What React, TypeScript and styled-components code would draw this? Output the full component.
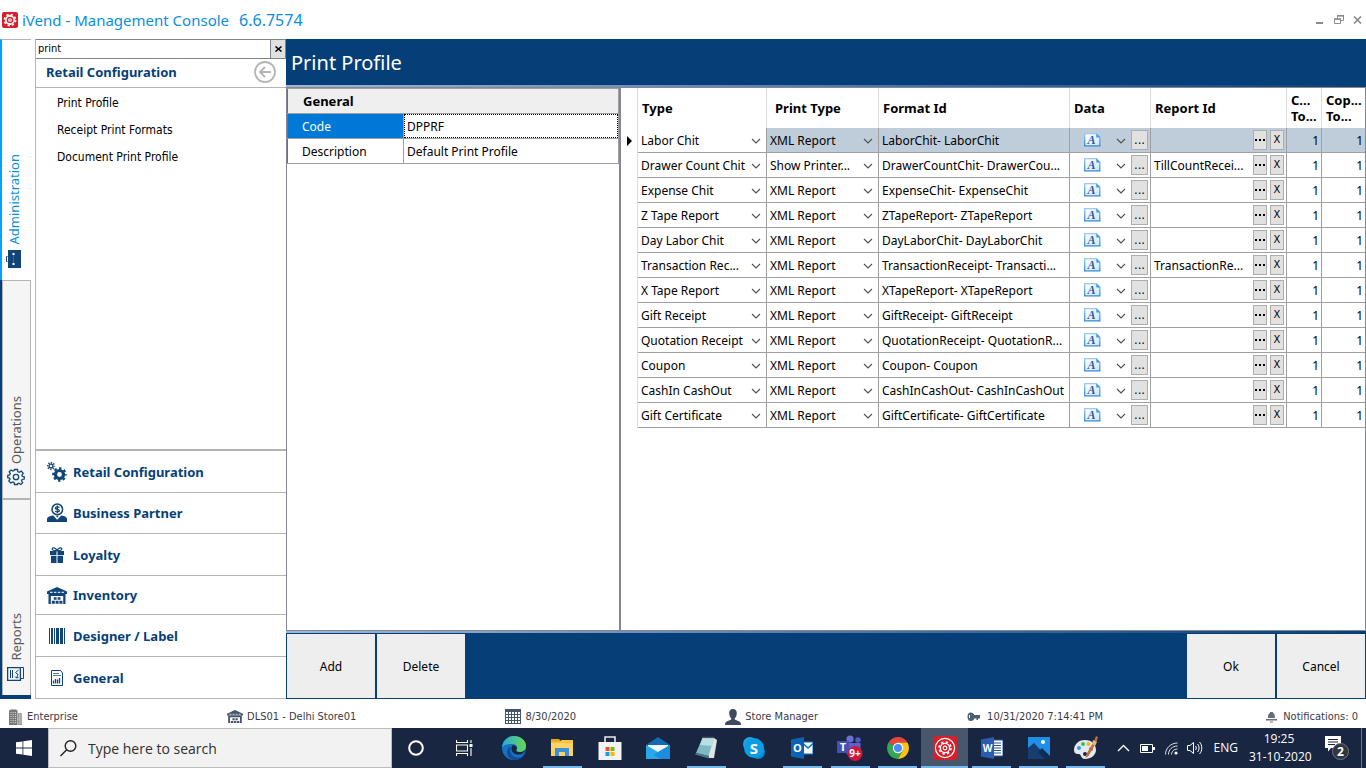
import React from "react";
import styled, { createGlobalStyle, css } from "styled-components";

const navy = "#063f78";
const ink = "#114577";
const line = "#b4b4b4";
const gridLine = "#a0a0a0";
const frame = "#828790";

const sans = `"Noto Sans", "Open Sans", sans-serif`;
const narrow = `"DejaVu Sans Condensed", "Noto Sans", sans-serif`;

const GlobalStyle = createGlobalStyle`
  *, *::before, *::after { box-sizing: border-box; }
  body { margin: 0; background: #fff; color: #000; font: 12px/16px ${sans}; }
  button, input, select { font: inherit; color: inherit; margin: 0; padding: 0; border: 0; border-radius: 0; background: none; outline: none; }
  svg { display: block; flex: none; }
  a { color: inherit; text-decoration: none; }
`;

/* ---------- window ---------- */

const Page = styled.div`
  min-height: 100vh;
  display: flex;
  flex-direction: column;
`;

const TitleBar = styled.header`
  height: 39px;
  display: flex;
  align-items: center;
  gap: 4px;
  padding-left: 2px;
  color: #0a8fdc;
  font-size: 15px;
  line-height: 20px;
`;

const Version = styled.span`
  margin-left: 6px;
  font-size: 16px;
`;

const WindowControls = styled.div`
  margin-left: auto;
  display: flex;
  gap: 2px;
`;

const WindowButton = styled.button`
  width: 17px;
  height: 16px;
  display: grid;
  place-items: center;
`;

const Workspace = styled.div`
  flex: 1;
  display: flex;
`;

/* ---------- module rail ---------- */

const Rail = styled.div`
  width: 31px;
  display: flex;
  flex-direction: column;
  background: ${navy};
  padding-bottom: 4px;
`;

const RailTab = styled.button<{ $active?: boolean; $grow: number }>`
  flex: ${(p) => p.$grow} 1 0;
  display: flex;
  flex-direction: column-reverse;
  align-items: center;
  gap: 4px;
  padding: 0 2px 12px 0;
  font-size: 13px;
  line-height: 18px;
  color: #5a5a5a;
  background: #f5f5f5;
  border: 1px solid ${line};
  border-bottom-width: 0;
  margin-left: 2px;

  & + & + & {
    border-top-width: 2px;
  }

  ${(p) =>
    p.$active &&
    css`
      gap: 6px;
      margin-left: 0;
      padding-right: 5px;
      color: #0a8fdc;
      background: #fff;
      border-width: 1px 0 0 2px;
      border-left-color: #00a2ff;
    `}
`;

const RailLabel = styled.span`
  writing-mode: vertical-rl;
  transform: rotate(180deg);
`;

/* ---------- side bar ---------- */

const Sidebar = styled.aside`
  width: 251px;
  margin-left: 4px;
  display: flex;
  flex-direction: column;
  border-left: 1px solid ${line};
  font-family: ${narrow};
`;

const SearchRow = styled.div`
  height: 20px;
  display: flex;
  border: 1px solid #7f858c;
  border-left: 0;
`;

const SearchInput = styled.input`
  flex: 1;
  min-width: 0;
  padding-left: 2px;
  font-size: 11px;
`;

const ClearButton = styled.button`
  width: 15px;
  display: grid;
  place-items: center;
  background: #e1e1e1;
  border-left: 1px solid #7f858c;
`;

const SidebarHeader = styled.div`
  height: 29px;
  display: flex;
  align-items: center;
  justify-content: space-between;
  padding: 0 10px 2px;
  border-bottom: 1px solid ${line};
`;

const SidebarTitle = styled.h2`
  margin: 0;
  font: bold 13px/16px ${sans};
  color: ${navy};
`;

const MenuList = styled.ul`
  flex: 1;
  margin: 0;
  padding: 2px 0 0 21px;
  list-style: none;
`;

const MenuLink = styled.a`
  display: block;
  line-height: 27px;
`;

const Sections = styled.nav`
  border-top: 2px solid ${line};
`;

const SectionButton = styled.button<{ $height: number }>`
  width: 100%;
  height: ${(p) => p.$height}px;
  display: flex;
  align-items: center;
  gap: 6px;
  padding-left: 11px;
  border-bottom: 1px solid ${line};
  font: bold 13px/16px ${sans};
  color: ${navy};
`;

/* ---------- content ---------- */

const Content = styled.main`
  flex: 1;
  min-width: 0;
  display: flex;
  flex-direction: column;
`;

const Banner = styled.div`
  height: 46px;
  display: flex;
  align-items: center;
  padding: 2px 5px 0;
  background: ${navy};
`;

const Heading = styled.h1`
  margin: 0;
  font: 20px/28px ${sans};
  color: #fff;
`;

const Shade = styled.div`
  height: 2px;
  background: linear-gradient(to right, #a3b6da, ${navy});
`;

const Panels = styled.div`
  flex: 1;
  display: flex;
  border: 1px solid ${frame};
`;

const ProfilePanel = styled.section`
  width: 334px;
  border-right: 2px solid ${frame};
`;

const LinesPanel = styled.section`
  flex: 1;
  min-width: 0;
`;

const PropertyTable = styled.table`
  width: 332px;
  table-layout: fixed;
  border-collapse: collapse;
  border: 1px solid #6e7276;

  th, td {
    height: 25px;
    padding: 2px 0 0 14px;
    text-align: left;
    font-weight: normal;
    border: 1px solid ${gridLine};
  }
  tr > * { border-left: 0; }
`;

const GroupHead = styled.th`
  && {
    padding: 0 0 0 15px;
    background: #efefef;
    font: bold 13px/16px ${sans};
  }
`;

const PropertyLabel = styled.th<{ $selected?: boolean }>`
  ${(p) => p.$selected && css`background: #0078d7; color: #fff;`}
`;

const PropertyValue = styled.td`
  && { padding: 0; border-left: 1px solid ${gridLine}; }
`;

const PropertyInput = styled.input<{ $selected?: boolean }>`
  display: block;
  width: 100%;
  height: 24px;
  padding: 0 2px;
  border: 1px ${(p) => (p.$selected ? "dotted #000" : "solid transparent")};
`;

const LinesTable = styled.table`
  width: 100%;
  table-layout: fixed;
  border-collapse: separate;
  border-spacing: 0;
`;

const HeadCell = styled.th<{ $inset?: boolean }>`
  height: 40px;
  padding: 0 0 0 ${(p) => (p.$inset ? 8 : 4)}px;
  text-align: left;
  white-space: nowrap;
  overflow: hidden;
  font: bold 13px/16px ${sans};
  border-right: 1px solid #dcdcdc;

  &:last-child { border-right: 0; }
`;

const Row = styled.tr<{ $selected?: boolean }>`
  td:nth-child(n + 3) {
    background: ${(p) => (p.$selected ? "#bfccd9" : "#fff")};
  }
`;

const Cell = styled.td<{ $right?: boolean }>`
  height: 25px;
  padding: 0 2px 0 3px;
  overflow: hidden;
  white-space: nowrap;
  text-align: ${(p) => (p.$right ? "right" : "left")};
  border-right: 1px solid ${gridLine};
  border-bottom: 1px solid ${gridLine};

  &:last-child { border-right: 0; }
`;

const MarkerCell = styled.td`
  border-right: 1px solid #dcdcdc;
  padding: 0 0 0 6px;
`;

const CellLine = styled.div`
  display: flex;
  align-items: center;
  height: 24px;
`;

const CellSelect = styled.select`
  flex: 1;
  min-width: 0;
  height: 24px;
  padding-top: 2px;
  appearance: none;
`;

const CellText = styled.span`
  display: block;
  flex: 1;
  min-width: 0;
  padding-top: 2px;
  overflow: hidden;
`;

const IconSlot = styled.span`
  flex: 1;
  padding: 0 0 1px 11px;
`;

const Arrow = styled.span<{ $end?: boolean }>`
  margin: 2px ${(p) => (p.$end ? 3 : 1)}px 0 0;
`;

const CellButton = styled.button<{ $wide?: boolean }>`
  width: ${(p) => (p.$wide ? 17 : 14)}px;
  height: 20px;
  margin-left: ${(p) => (p.$wide ? 4 : 3)}px;
  display: grid;
  place-items: center;
  background: #e1e1e1;
  border: 1px solid #adadad;
  font: ${(p) => (p.$wide ? 13 : 11)}px/16px ${narrow};
`;

const Actions = styled.footer`
  height: 66px;
  display: flex;
  gap: 2px;
  padding: 1px;
  background: ${navy};
`;

const ActionButton = styled.button<{ $push?: boolean }>`
  width: 88px;
  padding-top: 2px;
  background: #eee;
  ${(p) => p.$push && css`margin-left: auto;`}
`;

/* ---------- status bar ---------- */

const StatusBar = styled.div`
  height: 29px;
  display: flex;
  align-items: center;
  justify-content: space-between;
  padding: 6px 8px 0 9px;
  font: 11px/16px ${narrow};
  color: #3a3a44;
`;

const StatusItem = styled.div<{ $last?: boolean }>`
  display: flex;
  align-items: center;
  gap: 4px;
  padding-left: ${(p) => (p.$last ? 14 : 0)}px;
`;

/* ---------- taskbar ---------- */

const Taskbar = styled.div`
  height: 40px;
  display: flex;
  background: #192642;
  color: #fff;
`;

const TaskButton = styled.button<{ $open?: boolean; $active?: boolean; $slim?: boolean }>`
  width: ${(p) => (p.$slim ? 47 : 48)}px;
  display: grid;
  place-items: center;
  background-color: ${(p) => (p.$active ? "#4a566c" : "transparent")};
  ${(p) =>
    p.$open &&
    css`
      background-image: linear-gradient(#76b9ed, #76b9ed);
      background-position: bottom;
      background-size: ${p.$active ? 47 : 39}px 2px;
      background-repeat: no-repeat;
    `}
`;

const TaskSearch = styled.label`
  width: 344px;
  display: flex;
  align-items: center;
  gap: 11px;
  padding-left: 11px;
  background: #f2f2f2;
  border: 1px solid #bcbcbc;
  color: #222;
`;

const TaskSearchInput = styled.input`
  flex: 1;
  min-width: 0;
  padding-top: 2px;
  font: 14px/20px "Open Sans", "Noto Sans", sans-serif;
  &::placeholder { color: #303030; opacity: 1; }
`;

const Apps = styled.div`
  display: flex;
  margin-left: 2px;
`;

const Tray = styled.div`
  margin-left: auto;
  display: flex;
  align-items: center;
  font: 12px/18px "Open Sans", "Noto Sans", sans-serif;
`;

const TrayButton = styled.button`
  height: 40px;
  width: 24px;
  display: grid;
  place-items: center;
`;

const Language = styled.span`
  margin-left: 6px;
`;

const Clock = styled.div`
  width: 60px;
  margin-left: 11px;
  white-space: nowrap;
  text-align: center;
`;

const NoticeButton = styled.button`
  height: 40px;
  margin: 0 12px 0 16px;
`;

const DesktopEdge = styled.div`
  width: 5px;
  height: 40px;
  border-left: 1px solid #6c7688;
`;

/* ---------- icons ---------- */

const Gear = ({ cx, cy, r, hole, color }: { cx: number; cy: number; r: number; hole: number; color: string }) => {
  const mid = (r + hole) / 2;
  const tooth = (2 * Math.PI * (r + 0.7)) / 16;
  return (
    <g fill="none" stroke={color}>
      <circle cx={cx} cy={cy} r={mid} strokeWidth={r - hole} />
      <circle cx={cx} cy={cy} r={r + 0.7} strokeWidth="2" strokeDasharray={`${tooth} ${tooth}`} strokeDashoffset={tooth / 2} />
    </g>
  );
};

const BrandIcon = ({ size, round }: { size: number; round?: boolean }) => (
  <svg width={size} height={size} viewBox="0 0 24 24">
    <rect width="24" height="24" rx="3" fill="#d71f2b" />
    {round ? (
      <g fill="none" stroke="#fff">
        <circle cx="12" cy="12" r="9.6" strokeWidth="1.2" />
        <circle cx="12" cy="12" r="4.6" strokeWidth="1.3" />
        <circle cx="12" cy="12" r="6" strokeWidth="1.6" strokeDasharray="2.4 2.31" />
        <circle cx="12" cy="12" r="1.8" strokeWidth="1.2" />
      </g>
    ) : (
      <g fill="none" stroke="#fff">
        <circle cx="12" cy="12" r="6.2" strokeWidth="2.4" />
        <circle cx="12" cy="12" r="8.4" strokeWidth="2.4" strokeDasharray="3.3 3.3" />
        <circle cx="12" cy="12" r="2" strokeWidth="1.6" />
      </g>
    )}
  </svg>
);

const Chevron = ({ end }: { end?: boolean }) => (
  <Arrow $end={end}>
    <svg width="10" height="8" viewBox="0 0 10 8" fill="none" stroke="#505050" strokeWidth="1.100">
      <path d="M1 2l4 4 4-4" />
    </svg>
  </Arrow>
);

const DataIcon = () => (
  <svg width="17" height="14" viewBox="0 0 17 14">
    <defs>
      <linearGradient id="sheet" x1="0" y1="0" x2="1" y2="1">
        <stop offset="0" stopColor="#fff" />
        <stop offset="1" stopColor="#cde6fb" />
      </linearGradient>
      <linearGradient id="edge" x1="0" y1="0" x2="0" y2="1">
        <stop offset="0" stopColor="#9ccaf2" />
        <stop offset="1" stopColor="#2f88dc" />
      </linearGradient>
    </defs>
    <path d="M.7.700h11.800l3.300 3.600v8.500H.7z" fill="url(#sheet)" stroke="url(#edge)" strokeWidth="1.300" />
    <path d="M12.300.500v4h4z" fill="#3f98e8" />
    <text x="3.600" y="10.500" fontFamily="Liberation Serif, serif" fontSize="12" fontWeight="bold" fontStyle="italic" fill="#2b5a9a">A</text>
  </svg>
);

const Dots = () => (
  <svg width="10" height="4" viewBox="0 0 10 4">
    <path d="M0 1h2v2H0zM4 1h2v2H4zM8 1h2v2H8z" />
  </svg>
);

const CogsIcon = () => (
  <svg width="20" height="20" viewBox="0 0 20 20">
    <Gear cx={4} cy={4} r={2.5} hole={1.3} color={ink} />
    <Gear cx={12.5} cy={12.5} r={5.6} hole={2.4} color={ink} />
  </svg>
);

const PartnerIcon = () => (
  <svg width="20" height="20" viewBox="0 0 20 20">
    <circle cx="10.3" cy="6.4" r="5.3" fill="#fff" stroke={ink} strokeWidth="1.5" />
    <path d="M12.4 4.6c-.6-.9-4-1-4 .6 0 1.700 4 .8 4 2.600 0 1.500-3.400 1.500-4.200.3M10.300 2.600v7.600" fill="none" stroke={ink} strokeWidth="1.300" />
    <path d="M0 19v-3c0-2 2.200-3 6.200-3.600l4 4.300 4-4.300c4 .6 5.800 1.600 5.800 3.600v3z" fill={ink} />
    <path d="M8.800 12.800h3l-1.500 2z" fill={ink} />
  </svg>
);

const GiftIcon = () => (
  <svg width="20" height="16" viewBox="0 0 20 16">
    <path d="M3 4h6.500v4H3zM10.500 4H17v4h-6.500zM4 8.700h5.500V16H4zM10.500 8.700H16V16h-5.500z" fill={ink} />
    <path d="M10 3.600C8.600.2 5 .2 5.200 2.200 5.300 3.600 8 3.600 10 3.600c2 0 4.700 0 4.800-1.400C15 .2 11.400.2 10 3.600z" fill="none" stroke={ink} strokeWidth="1.200" />
  </svg>
);

const StoreIcon = ({ size = 20, color = ink }: { size?: number; color?: string }) => (
  <svg width={size} height={(size * 17) / 20} viewBox="0 0 20 17">
    <path d="M0 4.600L10 0l10 4.600V7H0z" fill={color} />
    <path d="M1.500 7h17v10h-2.300V9H3.800v8H1.500z" fill={color} />
    <path d="M3 5.300h2.600M7 5.300h2.400M10.800 5.300h2.400M14.600 5.300h2.400" stroke="#fff" strokeWidth="1" />
    <path d="M6.800 10.200h2.800v2.600H6.800zM10.600 10.200h2.800v2.600h-2.800zM4.800 13.800h3v3h-3zM8.600 13.800h3v3h-3zM12.400 13.800h3v3h-3z" fill={color} />
  </svg>
);

const BarcodeIcon = () => (
  <svg width="20" height="16" viewBox="0 0 20 16">
    <path d="M2 0h1v16H2zM4 0h2v16H4zM7 0h1v16H7zM9 0h3v16H9zM13 0h3v16h-3zM17 0h1v16h-1z" fill={ink} />
  </svg>
);

const ReportIcon = () => (
  <svg width="20" height="16" viewBox="0 0 20 16">
    <path d="M4.500.5h9l2 2.500v12.500h-11z" fill="#fff" stroke={ink} />
    <path d="M6 3.500h6M6 5.500h8" stroke={ink} opacity=".7" />
    <path d="M6.500 13.500v-3M8.500 13.500v-4.500M10.500 13.500V9.500M12.500 13.500V8" stroke={ink} strokeWidth="1.300" />
  </svg>
);

const CaseIcon = () => (
  <svg width="16" height="18" viewBox="0 0 16 18">
    <path d="M2 0h13v18H2z" fill={ink} />
    <path d="M1.500 6.500h-1v5h1" fill="none" stroke={ink} />
    <path d="M7.500 5v8" stroke="#3d6592" />
    <path d="M6.500 3h2v2h-2zM6.500 13h2v2h-2z" fill="#fff" />
  </svg>
);

const CogOutlineIcon = () => (
  <svg width="18" height="18" viewBox="0 0 24 24" fill="none" stroke={ink} strokeWidth="1.700">
    <path d="M10 2h4l.6 3 1.900.8L19 4.100 21.600 7l-1.700 2.500.5 1.500 2.600.7v3l-2.800.6-.8 1.800 1.500 2.500-2.500 2.300-2.500-1.600-1.700.7L14 22h-4l-.6-2.700-1.800-.8L5 20l-2.600-2.700L4 14.900l-.6-1.500L1 13v-3.200l2.600-.6.800-1.800L2.900 5 5.400 2.600 7.900 4l1.500-.6z" />
    <circle cx="12" cy="12" r="3.600" />
  </svg>
);

const ReportsTabIcon = () => (
  <svg width="17" height="18" viewBox="0 -2 17 18" fill="none" stroke={ink}>
    <path d="M13.500 2.500v-2h3v11h-3" />
    <path d="M.6.600h12.800v12.800H.6z" strokeWidth="1.300" />
    <path d="M3.500 3v8M5.500 3v8" />
    <path d="M11.500 3L8.500 5.500l2.500 2-1.500 3.500M8 9.500l1.500 1.500 2-.5" />
  </svg>
);

const BuildingIcon = () => (
  <svg width="14" height="16" viewBox="0 0 14 16">
    <path d="M0 1.500L2 .500h5l1.500 1V16H0z" fill="#777" />
    <path d="M9 4h3l1 1v11H9z" fill="#999" />
    <path d="M2 3v11M4.200 3v11M6.400 3v11M10.500 5.500v9.500M12 5.500v9.500" stroke="#ddd" strokeWidth="1" strokeDasharray="1 1" />
  </svg>
);

const CalendarIcon = () => (
  <svg width="16" height="15" viewBox="0 0 16 15">
    <path d="M0 0h16v15H0z" fill="#44546a" />
    <path d="M1 4h14M1 7h14M1 10h14M1 13h14" stroke="#fff" strokeWidth="2" strokeDasharray="2 1" />
  </svg>
);

const PersonIcon = () => (
  <svg width="16" height="16" viewBox="0 0 16 16">
    <path d="M8 0c2.600 0 4 1.800 3.800 4.600C11.600 7 10.800 8.400 9.800 9.200v1.400l4.500 2c1.200.6 1.700 1.600 1.700 3.400H0c0-1.800.5-2.800 1.700-3.400l4.500-2V9.200C5.200 8.400 4.400 7 4.200 4.600 4 1.800 5.400 0 8 0z" fill="#3d4b5c" />
  </svg>
);

const KeyIcon = () => (
  <svg width="16" height="10" viewBox="0 0 16 10">
    <path d="M3.500.5C6 .5 7 2 7.300 3H13v3.500H11V8H9.500V6.500H7.300C7 7.500 6 9 3.500 9 1.500 9 .5 7 .5 4.700S1.500.5 3.500.5z" fill="#4a6172" />
    <path d="M2.500 3v3" stroke="#fff" />
  </svg>
);

const BellIcon = () => (
  <svg width="13" height="12" viewBox="0 0 13 12" fill="#666e76">
    <path d="M4 1h3v1c1.500.5 2 2 2 5H2c0-3 .5-4.500 2-5zM0 8h11v1.500H0zM4 10.500h3v1H4z" />
  </svg>
);

const WindowsIcon = () => (
  <svg width="16" height="16" viewBox="0 0 16 16" fill="#fff">
    <path d="M0 2.300l6.500-.9v6.200H0zM7.300 1.300L16 0v7.600H7.300zM0 8.400h6.500v6.200L0 13.700zM7.300 8.400H16V16l-8.700-1.300z" />
  </svg>
);

const EdgeIcon = () => (
  <svg width="24" height="24" viewBox="0 0 24 24">
    <defs>
      <linearGradient id="wave" x1="0" y1="0" x2="1" y2="0">
        <stop offset="0" stopColor="#2ba7e0" />
        <stop offset="1" stopColor="#66d94f" />
      </linearGradient>
    </defs>
    <circle cx="12" cy="12" r="12" fill="#1673c4" />
    <path d="M0 11C1 4 6 0 12 0c7 0 12 4.500 12 10 0 4-3.200 6-6.500 6-2.800 0-4-1.200-3-2.300 1.600-1.700.5-5.200-3.500-5.700C6.500 7.600 2 9 0 11z" fill="url(#wave)" />
    <path d="M8.500 12c-1.500 5 2.500 10 8.500 9.500 2.200-.3 4-1.200 5.200-2.500C20 22.500 16.500 24 13 24 8 24 5 20 5 16.500 5 13.500 6.500 11.300 9.300 10.500z" fill="#0f4d9a" />
    <path d="M11 9c3.500.5 4.700 3.200 3.500 4.700-1 1.100.2 2.300 3 2.300 2.500 0 4.700-1 5.800-2.600-.8 3.600-3.800 5.200-7 5.200-4 0-6.800-2.600-6.800-5.600 0-1.600.5-3 1.500-4z" fill="#192642" />
  </svg>
);

const FolderIcon = () => (
  <svg width="22" height="20" viewBox="0 0 22 20">
    <path d="M0 1h8l2 2.500h12V6H0z" fill="#e9a820" />
    <path d="M0 4h22v14H0z" fill="#fdd267" />
    <path d="M0 3.500h9l1.500-1.500H22v3H0z" fill="#f7c340" />
    <path d="M4 10h14v8h-4v-4H8v4H4z" fill="#3c90d8" />
  </svg>
);

const ShopIcon = () => (
  <svg width="24" height="24" viewBox="0 0 24 24">
    <path d="M7 7V1h10v6" fill="none" stroke="#e8e8e8" strokeWidth="1.600" />
    <path d="M.5 6h23v18H.5z" fill="#f3f3f3" />
    <path d="M7.500 11h4v4h-4z" fill="#f25022" />
    <path d="M12.500 11h4v4h-4z" fill="#7fba00" />
    <path d="M7.500 16h4v4h-4z" fill="#00a4ef" />
    <path d="M12.500 16h4v4h-4z" fill="#ffb900" />
  </svg>
);

const MailIcon = () => (
  <svg width="24" height="22" viewBox="0 0 24 22">
    <path d="M0 8l12-8 12 8v14H0z" fill="#1269b4" />
    <path d="M2 8h20v4l-10 6L2 12z" fill="#f1f6fb" />
    <path d="M0 8l12 7L24 8v14H0z" fill="#28a8ea" />
    <path d="M24 8L8 17.500 14 22h10z" fill="#1c8fdc" />
  </svg>
);

const NotepadIcon = () => (
  <svg width="24" height="24" viewBox="0 0 24 24">
    <path d="M9 2h11l3 2-3 18-5 0z" fill="#dfe3e3" />
    <path d="M8.500 2H20l-5.500 18L2 17z" fill="#7fb9c3" />
    <path d="M8.500 2H20l-2.500 8L6 9z" fill="#b7dfe4" />
    <path d="M2 17l12.500 3 .5 2.500L1 18.500z" fill="#4e7884" />
    <path d="M8.500 1.500h12" stroke="#777" strokeWidth="1.500" strokeDasharray="1 1" />
  </svg>
);

const appFont = `"Open Sans", "Noto Sans", sans-serif`;

const SkypeIcon = () => (
  <svg width="22" height="24" viewBox="0 0 22 24">
    <circle cx="7" cy="8" r="7" fill="#1aa8ea" />
    <circle cx="15" cy="16" r="7" fill="#0a86d0" />
    <circle cx="11" cy="12" r="10" fill="#0f9ce4" />
    <text x="11" y="17.500" textAnchor="middle" fontFamily={appFont} fontSize="15" fontWeight="bold" fill="#fff">S</text>
  </svg>
);

const OutlookIcon = () => (
  <svg width="22" height="22" viewBox="0 0 22 22">
    <path d="M11 5h11v12H11z" fill="#f5faff" stroke="#0f6fc0" />
    <path d="M12 6.500l5 4.500 5-4.500" fill="none" stroke="#0f6fc0" strokeWidth="1.600" />
    <path d="M0 2.500L13 0v22L0 19.500z" fill="#0a63b6" />
    <text x="6.500" y="15" textAnchor="middle" fontFamily={appFont} fontSize="11" fontWeight="bold" fill="#fff">O</text>
  </svg>
);

const TeamsIcon = () => (
  <svg width="26" height="26" viewBox="0 0 26 26">
    <circle cx="13" cy="4" r="3.600" fill="#6a70d0" />
    <circle cx="21" cy="5" r="2.700" fill="#5159c4" />
    <path d="M8 8h15.500v8c0 4-3 6-7 6s-8-3-8-7z" fill="#5a62c8" />
    <path d="M0 6h12v12H0z" fill="#4450b8" />
    <text x="6" y="16" textAnchor="middle" fontFamily={appFont} fontSize="11" fontWeight="bold" fill="#fff">T</text>
    <circle cx="18" cy="18.500" r="7.500" fill="#d0163c" />
    <text x="18" y="22" textAnchor="middle" fontFamily={appFont} fontSize="10" fontWeight="bold" fill="#fff">9+</text>
  </svg>
);

const ChromeIcon = () => (
  <svg width="22" height="22" viewBox="0 0 22 22">
    <path d="M11 11L1.500 5.500A11 11 0 0 1 20.500 5.500H11z" fill="#e8453c" />
    <path d="M11 11L1.500 5.500A11 11 0 0 0 11 22l5-9z" fill="#33a852" />
    <path d="M11 5.500h9.500A11 11 0 0 1 11 22l5-9z" fill="#fbc116" />
    <circle cx="11" cy="11" r="5.200" fill="#fff" />
    <circle cx="11" cy="11" r="4" fill="#4c8bf5" />
  </svg>
);

const WordIcon = () => (
  <svg width="22" height="22" viewBox="0 0 22 22">
    <path d="M11 3h11v16H11z" fill="#fff" stroke="#2a5699" />
    <path d="M13 6h7M13 8.500h7M13 11h7M13 13.500h7M13 16h7" stroke="#2a5699" strokeWidth="1.200" />
    <path d="M0 2.500L13 0v22L0 19.500z" fill="#2a5db0" />
    <text x="6.500" y="15" textAnchor="middle" fontFamily={appFont} fontSize="10" fontWeight="bold" fill="#fff">W</text>
  </svg>
);

const PhotosIcon = () => (
  <svg width="22" height="22" viewBox="0 0 22 22">
    <path d="M0 0h22v22H0z" fill="#1f8fe8" />
    <path d="M0 11l6-5 15 16H0z" fill="#173d72" />
    <path d="M10 15l4-4 8 8v3h-5z" fill="#0f2c56" />
    <circle cx="15" cy="5" r="2" fill="#fff" />
  </svg>
);

const PaintIcon = () => (
  <svg width="24" height="24" viewBox="0 0 24 24">
    <path d="M11 4C4 4 0 9 0 14c0 4 3 4 5 4s2 5 6 5c6 0 11-4 11-9S18 4 11 4z" fill="#e3e9ef" />
    <circle cx="5" cy="12" r="2" fill="#2f9be0" />
    <circle cx="9" cy="8" r="2" fill="#4fb84e" />
    <circle cx="14.500" cy="8" r="2" fill="#f0b428" />
    <circle cx="17" cy="13" r="2" fill="#dc4030" />
    <circle cx="11" cy="18" r="2" fill="#192642" />
    <path d="M20 5l2-5 2 1-1.500 5-8 14-3 2 1-4z" fill="#b6713c" />
    <path d="M19 4l4 2-2 4-3-2z" fill="#e6b878" />
  </svg>
);

/* ---------- data ---------- */

type Line = { type: string; print?: string; format: string; report?: string };

const lines: Line[] = [
  { type: "Labor Chit", format: "LaborChit- LaborChit" },
  { type: "Drawer Count Chit", print: "Show Printer...", format: "DrawerCountChit- DrawerCou...", report: "TillCountRecei..." },
  { type: "Expense Chit", format: "ExpenseChit- ExpenseChit" },
  { type: "Z Tape Report", format: "ZTapeReport- ZTapeReport" },
  { type: "Day Labor Chit", format: "DayLaborChit- DayLaborChit" },
  { type: "Transaction Rec...", format: "TransactionReceipt- Transacti...", report: "TransactionRe..." },
  { type: "X Tape Report", format: "XTapeReport- XTapeReport" },
  { type: "Gift Receipt", format: "GiftReceipt- GiftReceipt" },
  { type: "Quotation Receipt", format: "QuotationReceipt- QuotationR..." },
  { type: "Coupon", format: "Coupon- Coupon" },
  { type: "CashIn CashOut", format: "CashInCashOut- CashInCashOut" },
  { type: "Gift Certificate", format: "GiftCertificate- GiftCertificate" },
];

const sections = [
  { label: "Retail Configuration", icon: <CogsIcon />, height: 42 },
  { label: "Business Partner", icon: <PartnerIcon />, height: 41 },
  { label: "Loyalty", icon: <GiftIcon />, height: 42 },
  { label: "Inventory", icon: <StoreIcon />, height: 39 },
  { label: "Designer / Label", icon: <BarcodeIcon />, height: 42 },
  { label: "General", icon: <ReportIcon />, height: 42 },
];

const apps = [
  { name: "Edge", icon: <EdgeIcon /> },
  { name: "File Explorer", icon: <FolderIcon />, open: true },
  { name: "Store", icon: <ShopIcon /> },
  { name: "Mail", icon: <MailIcon /> },
  { name: "Notepad", icon: <NotepadIcon />, open: true },
  { name: "Skype", icon: <SkypeIcon /> },
  { name: "Outlook", icon: <OutlookIcon />, open: true },
  { name: "Teams", icon: <TeamsIcon />, open: true },
  { name: "Chrome", icon: <ChromeIcon />, open: true, slim: true },
  { name: "iVend", icon: <BrandIcon size={24} round />, open: true, active: true, slim: true },
  { name: "Word", icon: <WordIcon />, open: true, slim: true },
  { name: "Photos", icon: <PhotosIcon />, open: true, slim: true },
  { name: "Paint", icon: <PaintIcon />, open: true, slim: true },
];

const Combo = ({ value, label }: { value: string; label: string }) => (
  <CellLine>
    <CellSelect aria-label={label} defaultValue={value}>
      <option>{value}</option>
    </CellSelect>
    <Chevron end />
  </CellLine>
);

export default function App() {
  return (
    <Page>
      <GlobalStyle />
      <TitleBar>
        <BrandIcon size={16} />
        <span>iVend - Management Console</span>
        <Version>6.6.7574</Version>
        <WindowControls>
          <WindowButton aria-label="Minimize">
            <svg width="7" height="8"><path d="M0 6h7v2H0z" fill="#8c8c8c" /></svg>
          </WindowButton>
          <WindowButton aria-label="Restore">
            <svg width="10" height="9" fill="none" stroke="#8c8c8c">
              <path d="M3.500 3V1h6v4.500H7" /><path d="M3 .5h7M0 4h7" strokeWidth="1.500" /><path d="M.5 4h6v4.500h-6z" />
            </svg>
          </WindowButton>
          <WindowButton aria-label="Close">
            <svg width="9" height="8" stroke="#8c8c8c" strokeWidth="1.700"><path d="M1 .5l7 7M8 .5l-7 7" /></svg>
          </WindowButton>
        </WindowControls>
      </TitleBar>

      <Workspace>
        <Rail>
          <RailTab $active $grow={228}><CaseIcon /><RailLabel>Administration</RailLabel></RailTab>
          <RailTab $grow={205}><CogOutlineIcon /><RailLabel>Operations</RailLabel></RailTab>
          <RailTab $grow={183}><ReportsTabIcon /><RailLabel>Reports</RailLabel></RailTab>
        </Rail>

        <Sidebar>
          <SearchRow>
            <SearchInput aria-label="Search menu" defaultValue="print" />
            <ClearButton aria-label="Clear search">
              <svg width="7" height="6" stroke="#000" strokeWidth="1.500"><path d="M.5.500l6 5M6.500.500l-6 5" /></svg>
            </ClearButton>
          </SearchRow>
          <SidebarHeader>
            <SidebarTitle>Retail Configuration</SidebarTitle>
            <button aria-label="Back">
              <svg width="22" height="22" viewBox="0 0 22 22" fill="none" stroke="#b5b5b5" strokeWidth="1.800">
                <circle cx="11" cy="11" r="10" /><path d="M17 11H6M11 6l-5 5 5 5" />
              </svg>
            </button>
          </SidebarHeader>
          <MenuList>
            {["Print Profile", "Receipt Print Formats", "Document Print Profile"].map((m) => (
              <li key={m}><MenuLink href="#">{m}</MenuLink></li>
            ))}
          </MenuList>
          <Sections>
            {sections.map((s) => (
              <SectionButton key={s.label} $height={s.height}>{s.icon}{s.label}</SectionButton>
            ))}
          </Sections>
        </Sidebar>

        <Content>
          <Banner><Heading>Print Profile</Heading></Banner>
          <Shade />
          <Panels>
            <ProfilePanel>
              <PropertyTable>
                <colgroup><col width="116" /><col /></colgroup>
                <thead>
                  <tr><GroupHead colSpan={2}>General</GroupHead></tr>
                </thead>
                <tbody>
                  <tr>
                    <PropertyLabel $selected><label htmlFor="code">Code</label></PropertyLabel>
                    <PropertyValue><PropertyInput id="code" $selected defaultValue="DPPRF" /></PropertyValue>
                  </tr>
                  <tr>
                    <PropertyLabel><label htmlFor="description">Description</label></PropertyLabel>
                    <PropertyValue><PropertyInput id="description" defaultValue="Default Print Profile" /></PropertyValue>
                  </tr>
                </tbody>
              </PropertyTable>
            </ProfilePanel>
            <LinesPanel>
              <LinesTable>
                <colgroup>
                  <col width="17" /><col width="129" /><col width="112" /><col /><col width="81" />
                  <col width="136" /><col width="35" /><col width="43" />
                </colgroup>
                <thead>
                  <tr>
                    <HeadCell aria-label="Current row" />
                    <HeadCell>Type</HeadCell>
                    <HeadCell $inset>Print Type</HeadCell>
                    <HeadCell>Format Id</HeadCell>
                    <HeadCell>Data</HeadCell>
                    <HeadCell>Report Id</HeadCell>
                    <HeadCell>C...<br />To...</HeadCell>
                    <HeadCell>Cop...<br />To...</HeadCell>
                  </tr>
                </thead>
                <tbody>
                  {lines.map((l, i) => (
                    <Row key={l.type} $selected={i === 0}>
                      <MarkerCell>
                        {i === 0 && <svg width="6" height="10"><path d="M0 0l5 5-5 5z" /></svg>}
                      </MarkerCell>
                      <Cell><Combo label="Type" value={l.type} /></Cell>
                      <Cell><Combo label="Print type" value={l.print ?? "XML Report"} /></Cell>
                      <Cell><CellText>{l.format}</CellText></Cell>
                      <Cell>
                        <CellLine>
                          <IconSlot><DataIcon /></IconSlot>
                          <Chevron />
                          <CellButton $wide>...</CellButton>
                        </CellLine>
                      </Cell>
                      <Cell>
                        <CellLine>
                          <CellText>{l.report}</CellText>
                          <CellButton aria-label="Browse report"><Dots /></CellButton>
                          <CellButton>X</CellButton>
                        </CellLine>
                      </Cell>
                      <Cell $right><CellText>1</CellText></Cell>
                      <Cell $right><CellText>1</CellText></Cell>
                    </Row>
                  ))}
                </tbody>
              </LinesTable>
            </LinesPanel>
          </Panels>
          <Shade />
          <Actions>
            <ActionButton>Add</ActionButton>
            <ActionButton>Delete</ActionButton>
            <ActionButton $push>Ok</ActionButton>
            <ActionButton>Cancel</ActionButton>
          </Actions>
        </Content>
      </Workspace>

      <StatusBar>
        <StatusItem><BuildingIcon />Enterprise</StatusItem>
        <StatusItem><StoreIcon size={16} color="#44546a" />DLS01 - Delhi Store01</StatusItem>
        <StatusItem><CalendarIcon />8/30/2020</StatusItem>
        <StatusItem><PersonIcon />Store Manager</StatusItem>
        <StatusItem><KeyIcon />10/31/2020 7:14:41 PM</StatusItem>
        <StatusItem $last><BellIcon />Notifications: 0</StatusItem>
      </StatusBar>

      <Taskbar>
        <TaskButton aria-label="Start"><WindowsIcon /></TaskButton>
        <TaskSearch>
          <svg width="17" height="17" viewBox="0 0 17 17" fill="none" stroke="#222" strokeWidth="1.400">
            <circle cx="10.500" cy="6" r="5.300" /><path d="M6.700 9.800L.5 16" />
          </svg>
          <TaskSearchInput placeholder="Type here to search" aria-label="Type here to search" />
        </TaskSearch>
        <TaskButton aria-label="Cortana">
          <svg width="16" height="16" fill="none" stroke="#fff" strokeWidth="2"><circle cx="8" cy="8" r="6.800" /></svg>
        </TaskButton>
        <TaskButton aria-label="Task view">
          <svg width="17" height="16" viewBox="0 0 17 16" fill="none" stroke="#fff" strokeWidth="1.100">
            <path d="M.5 0v2.500h11V0M.5 16v-2.500h11V16M.5 5h11v6H.5zM15 0v3M15 8v8" />
            <path d="M13.500 4h3v3h-3z" fill="#fff" stroke="none" />
          </svg>
        </TaskButton>
        <Apps>
          {apps.map((a) => (
            <TaskButton key={a.name} aria-label={a.name} $open={a.open} $active={a.active} $slim={a.slim}>
              {a.icon}
            </TaskButton>
          ))}
        </Apps>
        <Tray>
          <TrayButton aria-label="Show hidden icons">
            <svg width="13" height="8" fill="none" stroke="#fff" strokeWidth="1.400"><path d="M1 7l5.500-5.500L12 7" /></svg>
          </TrayButton>
          <TrayButton aria-label="Battery">
            <svg width="15" height="9" fill="none" stroke="#fff"><path d="M.5.500h12v8H.5z" /><path d="M2 2h6v5H2zM13 3h2v3h-2z" fill="#fff" stroke="none" /></svg>
          </TrayButton>
          <TrayButton aria-label="Network">
            <svg width="13" height="13" viewBox="0 0 13 13" fill="none" stroke="#fff">
              <path d="M.5 12.500C.5 6 6 1 12.500 1M3.500 12.500c0-5 4-8.500 9-8.500M6.500 12.500c0-3 2.500-5.500 6-5.500" opacity=".85" />
              <circle cx="11" cy="11" r="1.600" fill="#fff" stroke="none" />
            </svg>
          </TrayButton>
          <TrayButton aria-label="Volume">
            <svg width="17" height="14" viewBox="0 0 17 14" fill="none" stroke="#fff">
              <path d="M.5 4.500H3L6.500 1.500v11L3 9.500H.5z" /><path d="M8.500 5c1 1 1 3 0 4M10.500 3c2 2 2 6 0 8M12.500 1c3 3 3 9 0 12" />
            </svg>
          </TrayButton>
          <Language>ENG</Language>
          <Clock>19:25<br />31-10-2020</Clock>
          <NoticeButton aria-label="Notifications">
            <svg width="24" height="26" viewBox="0 0 24 26">
              <path d="M0 1h16v12H6l-3 3.500V13H0z" fill="#fff" />
              <path d="M3 4.500h10M3 7h10M3 9.500h7" stroke="#192642" />
              <circle cx="15.500" cy="16.500" r="8" fill="#303743" stroke="#707784" />
              <text x="15.500" y="21" textAnchor="middle" fontFamily={appFont} fontSize="12" fontWeight="bold" fill="#fff">2</text>
            </svg>
          </NoticeButton>
          <DesktopEdge />
        </Tray>
      </Taskbar>
    </Page>
  );
}
